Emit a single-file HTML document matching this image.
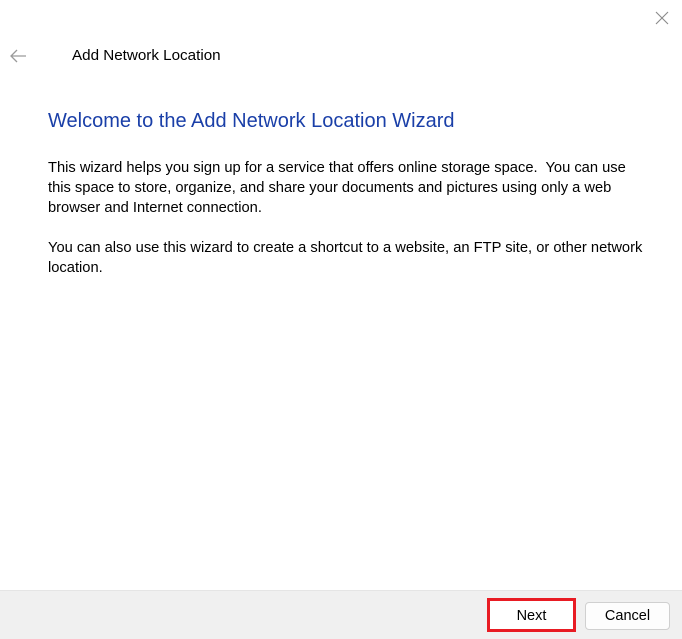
<!DOCTYPE html>
<html><head><style>
body{margin:0;width:682px;height:638px;background:#fff;font-family:"Liberation Sans",sans-serif;position:relative;overflow:hidden;color:#000}
.abs{position:absolute;white-space:nowrap}
p{margin:0}
</style></head><body>
<svg class="abs" style="left:655px;top:11px" width="14" height="14"><path d="M1 1L13 13M13 1L1 13" stroke="#8a8a8a" stroke-width="1.1"/></svg>
<svg class="abs" style="left:9px;top:48px" width="18" height="16"><path d="M17 8H2M8 2L2 8L8 14" stroke="#9a9a9a" stroke-width="1.3" fill="none"/></svg>
<div class="abs" style="left:72px;top:47px;font-size:15.2px">Add Network Location</div>
<div class="abs" style="left:48px;top:110px;font-size:20px;color:#1a3fa8">Welcome to the Add Network Location Wizard</div>
<div class="abs" style="left:48px;top:158px;font-size:14.7px;line-height:20px;white-space:nowrap">
<p>This wizard helps you sign up for a service that offers online storage space.&nbsp; You can use<br>this space to store, organize, and share your documents and pictures using only a web<br>browser and Internet connection.</p>
<p style="margin-top:20px">You can also use this wizard to create a shortcut to a website, an FTP site, or other network<br>location.</p>
</div>
<div class="abs" style="left:0;top:590px;width:682px;height:48px;background:#f0f0f0;border-top:1px solid #e5e5e5"></div>
<div class="abs" style="left:487px;top:598px;width:83px;height:28px;border:3px solid #e81b23;background:#fff;font-size:14.5px;text-align:center;line-height:30px">Next</div>
<div class="abs" style="left:585px;top:602px;width:83px;height:26px;border:1px solid #d0d0d0;border-radius:4px;background:#fdfdfd;font-size:14.5px;text-align:center;line-height:27px">Cancel</div>
</body></html>
